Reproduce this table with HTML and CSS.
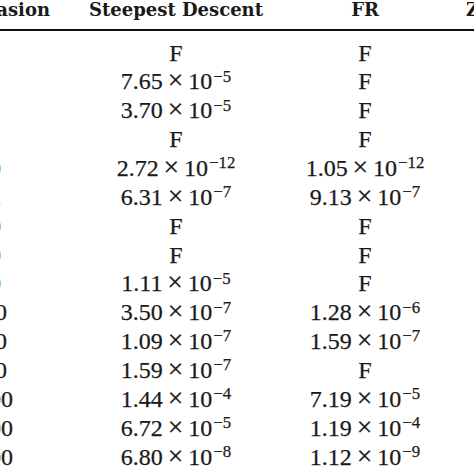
FILE: index.html
```html
<!DOCTYPE html>
<html>
<head>
<meta charset="utf-8">
<link rel="stylesheet" href="styles.css">
</head>
<body>
<table class="results">
  <colgroup>
    <col class="c-dim">
    <col class="c-sd">
    <col class="c-fr">
    <col class="c-z">
  </colgroup>
  <thead>
    <tr>
      <th class="h-dim">Occasion</th>
      <th>Steepest Descent</th>
      <th>FR</th>
      <th class="h-z">Z</th>
    </tr>
  </thead>
  <tbody>
    <tr><td>2</td><td>F</td><td>F</td><td></td></tr>
    <tr><td>4</td><td>7.65<span class="x">×</span>10<sup>−5</sup></td><td>F</td><td></td></tr>
    <tr><td>5</td><td>3.70<span class="x">×</span>10<sup>−5</sup></td><td>F</td><td></td></tr>
    <tr><td>8</td><td>F</td><td>F</td><td></td></tr>
    <tr><td>10</td><td>2.72<span class="x">×</span>10<sup>−12</sup></td><td>1.05<span class="x">×</span>10<sup>−12</sup></td><td></td></tr>
    <tr><td>12</td><td>6.31<span class="x">×</span>10<sup>−7</sup></td><td>9.13<span class="x">×</span>10<sup>−7</sup></td><td></td></tr>
    <tr><td>20</td><td>F</td><td>F</td><td></td></tr>
    <tr><td>40</td><td>F</td><td>F</td><td></td></tr>
    <tr><td>50</td><td>1.11<span class="x">×</span>10<sup>−5</sup></td><td>F</td><td></td></tr>
    <tr><td>100</td><td>3.50<span class="x">×</span>10<sup>−7</sup></td><td>1.28<span class="x">×</span>10<sup>−6</sup></td><td></td></tr>
    <tr><td>200</td><td>1.09<span class="x">×</span>10<sup>−7</sup></td><td>1.59<span class="x">×</span>10<sup>−7</sup></td><td></td></tr>
    <tr><td>500</td><td>1.59<span class="x">×</span>10<sup>−7</sup></td><td>F</td><td></td></tr>
    <tr><td>1000</td><td>1.44<span class="x">×</span>10<sup>−4</sup></td><td>7.19<span class="x">×</span>10<sup>−5</sup></td><td></td></tr>
    <tr><td>2000</td><td>6.72<span class="x">×</span>10<sup>−5</sup></td><td>1.19<span class="x">×</span>10<sup>−4</sup></td><td></td></tr>
    <tr><td>5000</td><td>6.80<span class="x">×</span>10<sup>−8</sup></td><td>1.12<span class="x">×</span>10<sup>−9</sup></td><td></td></tr>
  </tbody>
</table>
</body>
</html>
```

FILE: styles.css
```css
html, body {
  margin: 0;
  padding: 0;
  overflow: hidden;
  background: #ffffff;
}

.results {
  border-collapse: collapse;
  table-layout: fixed;
  width: 763px;
  margin-left: -103.5px;
  margin-top: -1.7px;
  color: #1a1a1a;
}

.c-dim { width: 185px; }
.c-sd { width: 189px; }
.c-fr { width: 189px; }
.c-z { width: 200px; }

.results th {
  font-family: "DejaVu Serif", serif;
  font-weight: bold;
  font-size: 18px;
  line-height: 24px;
  padding: 0 0 6.7px 0;
  text-align: center;
  white-space: nowrap;
  border-bottom: 2px solid #111111;
}

.results th.h-dim {
  text-align: right;
  padding-right: 31.5px;
}

.results th.h-z {
  text-align: left;
  padding-left: 6.5px;
}

.results td {
  font-family: "Liberation Serif", serif;
  font-size: 24px;
  line-height: 28.86px;
  height: 28.86px;
  padding: 0;
  text-align: center;
  white-space: nowrap;
  -webkit-text-stroke: 0.25px #1a1a1a;
}

.results tbody tr:first-child td {
  padding-top: 7.6px;
}

.x {
  font-size: 1.15em;
  line-height: 0;
  margin: 0 0.18em;
}

.results sup {
  font-size: 0.7em;
  line-height: 0;
  vertical-align: 0.46em;
  margin-left: 1px;
}
```
